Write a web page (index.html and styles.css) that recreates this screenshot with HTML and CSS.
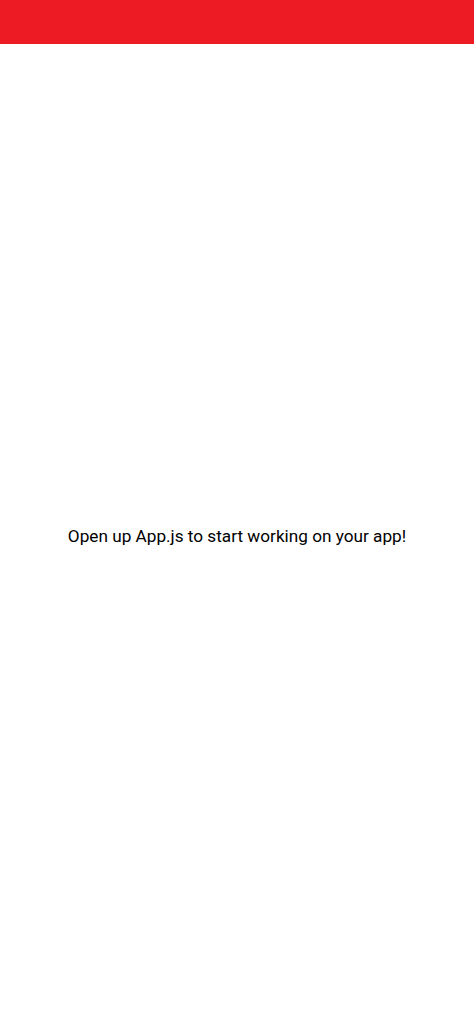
FILE: index.html
```html
<!DOCTYPE html>
<html>
<head>
<meta charset="utf-8">
<link rel="stylesheet" href="styles.css">
</head>
<body>
<div class="app">
  <div class="statusbar"></div>
  <div class="container">
    <p class="message">Open up App.js to start working on your app!</p>
  </div>
</div>
</body>
</html>
```
FILE: styles.css
```css
html, body {
  margin: 0;
  padding: 0;
  height: 100%;
  background: #ffffff;
}
.app {
  display: flex;
  flex-direction: column;
  height: 100%;
}
.statusbar {
  height: 44px;
  background: #ed1c24;
  flex-shrink: 0;
}
.container {
  flex: 1;
  display: flex;
  align-items: center;
  justify-content: center;
}
.message {
  margin: 0;
  font-family: Roboto, "Noto Sans", sans-serif;
  font-size: 17.2px;
  line-height: 24px;
  color: #000000;
}
```
